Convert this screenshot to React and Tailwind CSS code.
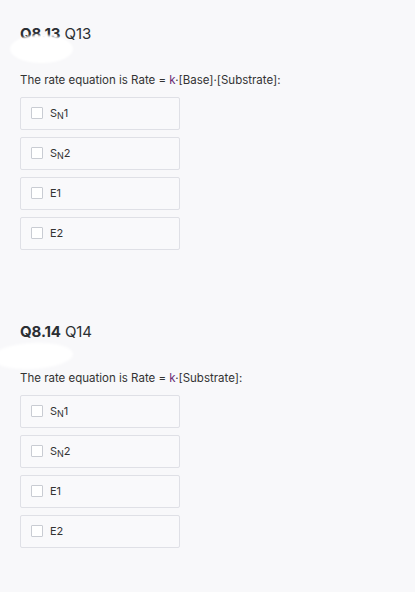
import React from 'react';

const questions = [
  { num: 'Q8.13', label: 'Q13', base: true },
  { num: 'Q8.14', label: 'Q14', base: false },
];

const options = ['SN1', 'SN2', 'E1', 'E2'];

function OptionLabel({ text }) {
  if (text.startsWith('SN')) {
    return (
      <span>
        S<span className="relative top-[2px] text-[9px]">N</span>
        {text.slice(2)}
      </span>
    );
  }
  return <span>{text}</span>;
}

function Question({ q }) {
  return (
    <section className="relative pl-5 pt-6">
      <h2 className="h-5 text-[15px] leading-5 tracking-[-0.1px] text-[#2b2f33]">
        <span className="font-bold">{q.num}</span> {q.label}
      </h2>
      {/* redaction smudge over the heading */}
      <div
        className={`pointer-events-none absolute rounded-[50%] bg-white blur-[1px] ${
          q.base ? 'left-[10px] top-[35px] h-[28px] w-[63px]' : 'left-[-8px] top-[45px] h-[26px] w-[81px] rotate-[-3deg]'
        }`}
      />
      <p className="mt-7 text-[11.5px] leading-4 text-[#333]">
        The rate equation is Rate = <span className="text-[#6a2c74]">k</span>·[{q.base ? 'Base]·[Substrate' : 'Substrate'}]:
      </p>
      <div className="mt-[9px] flex w-[160px] flex-col gap-[7px]">
        {options.map((o) => (
          <div key={o} className="flex h-[33px] items-start rounded-[2px] border border-[#dfe0e6] bg-[#f9f9fb] pl-[10px] pt-2">
            <span className="mt-px h-3 w-3 shrink-0 rounded-[1px] border border-[#c9ccd3] bg-white" />
            <span className="ml-[7px] text-[11px] leading-[14px] text-[#333]">
              <OptionLabel text={o} />
            </span>
          </div>
        ))}
      </div>
    </section>
  );
}

export default function App() {
  return (
    <div className="h-[592px] w-[415px] overflow-hidden bg-[#f8f8fa] font-['Inter',sans-serif]">
      <Question q={questions[0]} />
      <div className="h-[48px]" />
      <Question q={questions[1]} />
    </div>
  );
}
